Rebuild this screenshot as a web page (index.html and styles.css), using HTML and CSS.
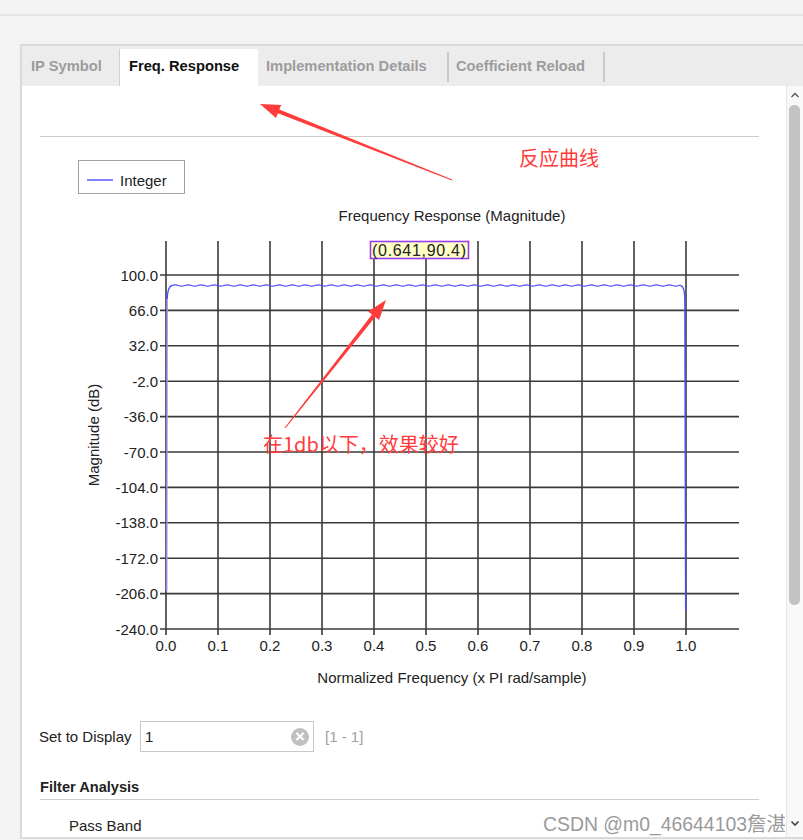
FILE: index.html
```html
<!DOCTYPE html>
<html>
<head>
<meta charset="utf-8">
<link rel="stylesheet" href="styles.css">
</head>
<body>
<div class="top"></div>
<div class="panel">
  <div class="tabs">
    <div class="tab t1">IP Symbol</div>
    <div class="tab t2 active">Freq. Response</div>
    <div class="tab t3">Implementation Details</div>
    <div class="tab t4">Coefficient Reload</div>
  </div>
  <div class="body">
    <div class="content">
      <div class="sep"></div>
      <svg class="chart" width="763" height="562" viewBox="0 0 763 562">
        <defs>
          <clipPath id="rip" clipPathUnits="userSpaceOnUse"><rect x="172" y="276" width="508.5" height="20"/></clipPath>
        </defs>
        <g transform="translate(-22,-138)" font-family="Liberation Sans, Arial, sans-serif">
          <rect x="78.5" y="161.5" width="106" height="33" fill="#fff" stroke="#a0a0a0"/>
          <line x1="87" y1="181" x2="113" y2="181" stroke="#5a5aff" stroke-width="1.5"/>
          <text x="120" y="186.5" font-size="15" fill="#222">Integer</text>
          <text x="452" y="221.5" font-size="15" fill="#222" text-anchor="middle">Frequency Response (Magnitude)</text>
          <g stroke="#3a3a3a" stroke-width="1.6">
            <line x1="160" y1="276" x2="739" y2="276"/>
            <line x1="160" y1="311.4" x2="739" y2="311.4"/>
            <line x1="160" y1="346.8" x2="739" y2="346.8"/>
            <line x1="160" y1="382.2" x2="739" y2="382.2"/>
            <line x1="160" y1="417.6" x2="739" y2="417.6"/>
            <line x1="160" y1="453" x2="739" y2="453"/>
            <line x1="160" y1="488.4" x2="739" y2="488.4"/>
            <line x1="160" y1="523.8" x2="739" y2="523.8"/>
            <line x1="160" y1="559.2" x2="739" y2="559.2"/>
            <line x1="160" y1="594.6" x2="739" y2="594.6"/>
            <line x1="160" y1="630" x2="739" y2="630"/>
            <line x1="166" y1="242" x2="166" y2="636"/>
            <line x1="218" y1="242" x2="218" y2="636"/>
            <line x1="270" y1="242" x2="270" y2="636"/>
            <line x1="322" y1="242" x2="322" y2="636"/>
            <line x1="374" y1="242" x2="374" y2="636"/>
            <line x1="426" y1="242" x2="426" y2="636"/>
            <line x1="478" y1="242" x2="478" y2="636"/>
            <line x1="530" y1="242" x2="530" y2="636"/>
            <line x1="582" y1="242" x2="582" y2="636"/>
            <line x1="634" y1="242" x2="634" y2="636"/>
            <line x1="686" y1="242" x2="686" y2="636"/>
          </g>
          <g font-size="15" fill="#222" text-anchor="end">
            <text x="158" y="281.5">100.0</text>
            <text x="158" y="316.9">66.0</text>
            <text x="158" y="352.3">32.0</text>
            <text x="158" y="387.7">-2.0</text>
            <text x="158" y="423.1">-36.0</text>
            <text x="158" y="458.5">-70.0</text>
            <text x="158" y="493.9">-104.0</text>
            <text x="158" y="529.3">-138.0</text>
            <text x="158" y="564.7">-172.0</text>
            <text x="158" y="600.1">-206.0</text>
            <text x="158" y="635.5">-240.0</text>
          </g>
          <g font-size="15" fill="#222" text-anchor="middle">
            <text x="166" y="652">0.0</text>
            <text x="218" y="652">0.1</text>
            <text x="270" y="652">0.2</text>
            <text x="322" y="652">0.3</text>
            <text x="374" y="652">0.4</text>
            <text x="426" y="652">0.5</text>
            <text x="478" y="652">0.6</text>
            <text x="530" y="652">0.7</text>
            <text x="582" y="652">0.8</text>
            <text x="634" y="652">0.9</text>
            <text x="686" y="652">1.0</text>
          </g>
          <text x="452" y="684" font-size="15" fill="#222" text-anchor="middle">Normalized Frequency (x PI rad/sample)</text>
          <text transform="translate(99,436) rotate(-90)" font-size="15" fill="#222" text-anchor="middle">Magnitude (dB)</text>
          <path fill="none" stroke="#9a9aff" stroke-width="1.4" d="M166.8,592 L167.2,300"/>
          <path fill="none" stroke="#4d4dff" stroke-width="1.3" d="M167.2,300 Q167.8,287 172,286.5"/>
          <path fill="none" stroke="#4d4dff" stroke-width="1.3" clip-path="url(#rip)" d="M172,286.5 q3.25,-1.3 6.5,0 t6.5,0 t6.5,0 t6.5,0 t6.5,0 t6.5,0 t6.5,0 t6.5,0 t6.5,0 t6.5,0 t6.5,0 t6.5,0 t6.5,0 t6.5,0 t6.5,0 t6.5,0 t6.5,0 t6.5,0 t6.5,0 t6.5,0 t6.5,0 t6.5,0 t6.5,0 t6.5,0 t6.5,0 t6.5,0 t6.5,0 t6.5,0 t6.5,0 t6.5,0 t6.5,0 t6.5,0 t6.5,0 t6.5,0 t6.5,0 t6.5,0 t6.5,0 t6.5,0 t6.5,0 t6.5,0 t6.5,0 t6.5,0 t6.5,0 t6.5,0 t6.5,0 t6.5,0 t6.5,0 t6.5,0 t6.5,0 t6.5,0 t6.5,0 t6.5,0 t6.5,0 t6.5,0 t6.5,0 t6.5,0 t6.5,0 t6.5,0 t6.5,0 t6.5,0 t6.5,0 t6.5,0 t6.5,0 t6.5,0 t6.5,0 t6.5,0 t6.5,0 t6.5,0 t6.5,0 t6.5,0 t6.5,0 t6.5,0 t6.5,0 t6.5,0 t6.5,0 t6.5,0 t6.5,0 t6.5,0 t6.5,0 t6.5,0"/>
          <path fill="none" stroke="#4d4dff" stroke-width="1.3" d="M680.5,286.5 Q684.5,287 684.8,300 L685.6,612"/>
          <rect x="370.5" y="242.5" width="98" height="17" fill="#ffffc6" stroke="#9a3cf2" stroke-width="1.6"/>
          <text x="372" y="257" font-size="16" fill="#222" letter-spacing="0.7">(0.641,90.4)</text>
        </g>
      </svg>
      <div class="row">
        <span class="lbl">Set to Display</span>
        <div class="input"><span>1</span><span class="clear">×</span></div>
        <span class="range">[1 - 1]</span>
      </div>
      <div class="section">Filter Analysis</div>
      <div class="item">Pass Band</div>
    </div>
    <div class="scroll">
      <svg class="arrow up" width="16" height="10" viewBox="0 0 16 10"><path d="M4.5,7 L8,3.5 L11.5,7" fill="none" stroke="#555" stroke-width="1.3"/></svg>
      <div class="thumb"></div>
      <svg class="arrow down" width="16" height="10" viewBox="0 0 16 10"><path d="M4.5,3.5 L8,7 L11.5,3.5" fill="none" stroke="#444" stroke-width="1.6"/></svg>
    </div>
  </div>
</div>

<svg class="annot" width="803" height="840" viewBox="0 0 803 840">
  <polygon fill="#ff3b3b" points="452.2,179.5 279.3,109.5 281.2,104.9 260,104 276.0,117.9 277.9,113.3 451.8,180.5"/>
  <polygon fill="#ff3b3b" points="285.4,428.3 375.2,316.9 379.1,320.0 386,300 368.1,311.4 372.0,314.5 284.6,427.7"/>
</svg>
<div class="note n1">反应曲线</div>
<div class="note n2">在1db以下，效果较好</div>
<div class="mark">CSDN @m0_46644103詹湛</div>
</body>
</html>
```
FILE: styles.css
```css
html, body {
  margin: 0;
  padding: 0;
}
body {
  width: 803px;
  height: 840px;
  overflow: hidden;
  background: #f3f3f3;
  font-family: "Liberation Sans", Arial, sans-serif;
  position: relative;
}
.top {
  height: 14px;
  border-bottom: 2px solid #e4e4e4;
}
.panel {
  margin: 28px 0 0 20px;
  height: 791px;
  border-top: 2px solid #dadada;
  border-left: 2px solid #dadada;
  border-bottom: 2px solid #dadada;
  display: flex;
  flex-direction: column;
}
.tabs {
  height: 40px;
  background: #ececec;
  display: flex;
  align-items: flex-end;
  flex: none;
}
.tab {
  height: 37px;
  display: flex;
  align-items: center;
  font-size: 14.7px;
  font-weight: bold;
  color: #9c9c9c;
  box-sizing: border-box;
  padding-bottom: 3px;
}
.t1 { padding-left: 9px; width: 97px; }
.t2 {
  width: 139px;
  padding-left: 9px;
  background: #fff;
  color: #111;
  border-left: 1px solid #cfcfcf;
}
.t3 {
  width: 191px;
  padding-left: 8px;
  position: relative;
}
.t4 {
  width: 156px;
  padding-left: 7px;
  position: relative;
}
.t3::after, .t4::after {
  content: "";
  position: absolute;
  right: 0;
  top: 3px;
  width: 2px;
  height: 30px;
  background: #c9c9c9;
}
.body {
  flex: 1;
  display: flex;
  background: #fff;
  overflow: hidden;
  min-height: 0;
}
.content {
  flex: 1;
  min-width: 0;
  padding: 50px 27px 0 18px;
  display: flex;
  flex-direction: column;
}
.sep {
  height: 1px;
  background: #cccccc;
  flex: none;
}
.chart {
  display: block;
  margin-left: -18px;
  flex: none;
}
.row {
  display: flex;
  align-items: center;
  margin-top: 22px;
  height: 31px;
  font-size: 15px;
  color: #222;
  flex: none;
}
.lbl {
  margin-left: -1px;
  width: 101px;
}
.input {
  width: 174px;
  height: 31px;
  box-sizing: border-box;
  border: 1px solid #c8c8c8;
  display: flex;
  align-items: center;
  justify-content: space-between;
  padding: 0 4px 0 4px;
}
.clear {
  width: 18px;
  height: 18px;
  border-radius: 50%;
  background: #c0c0c0;
  color: #fff;
  font-size: 17px;
  font-weight: bold;
  line-height: 18px;
  text-align: center;
}
.range {
  margin-left: 11px;
  color: #a0a0a0;
}
.section {
  margin-top: 27px;
  font-size: 14.6px;
  font-weight: bold;
  color: #222;
  padding-bottom: 3px;
  border-bottom: 1px solid #cfcfcf;
  height: 17px;
  flex: none;
}
.item {
  margin-top: 17px;
  padding-left: 29px;
  font-size: 15px;
  color: #222;
  flex: none;
}
.scroll {
  width: 16px;
  flex: none;
  background: #f8f8f8;
  border-left: 1px solid #e6e6e6;
  position: relative;
}
.thumb {
  position: absolute;
  left: 2px;
  top: 19px;
  width: 11px;
  height: 500px;
  border-radius: 5px;
  background: #c3c3c3;
}
.arrow {
  position: absolute;
  left: 0;
  display: block;
}
.up { top: 4px; }
.down { bottom: 9px; }
.annot {
  position: absolute;
  left: 0;
  top: 0;
  pointer-events: none;
}
.note {
  position: absolute;
  color: #ff3b3b;
  font-size: 20px;
  font-family: "Noto Sans CJK SC", sans-serif;
  line-height: 26px;
}
.n1 { left: 519px; top: 145px; }
.n2 { left: 263px; top: 431px; }
.mark {
  position: absolute;
  left: 543px;
  top: 808px;
  font-size: 19.4px;
  color: #9a9a9a;
  font-family: "Liberation Sans", "Noto Sans CJK SC", sans-serif;
  text-shadow: 0 0 2px #fff, 0 0 1px #fff;
}
```
